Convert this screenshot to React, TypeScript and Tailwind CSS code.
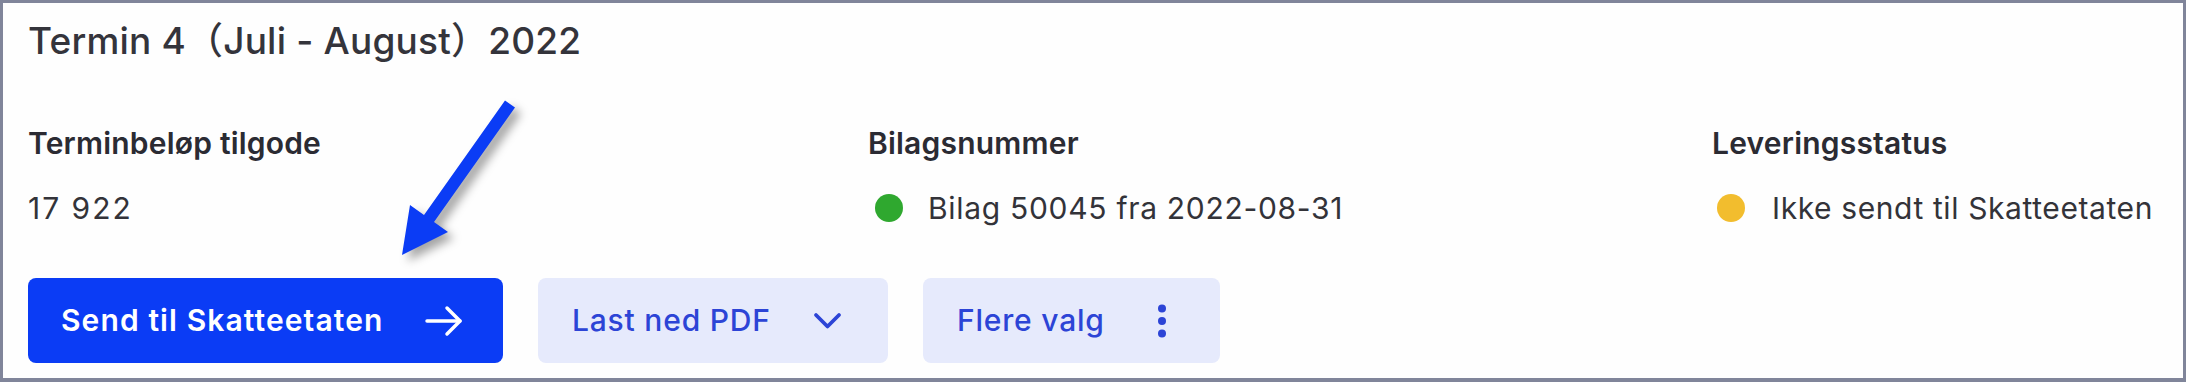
import React from "react";

function Dot({ color }: { color: string }) {
  return <span className={`inline-block h-[28px] w-[28px] shrink-0 rounded-full ${color}`} />;
}

export default function App() {
  return (
    <div className="relative box-border h-[382px] w-[2186px] overflow-hidden border-t-[3px] border-l-[3px] border-r-[3px] border-b-[4px] border-[#80859a] bg-[#fefefe] pl-[25px] pt-[16px] text-[#333339] font-['Inter','Noto_Sans_CJK_SC',sans-serif]">
      <h1 className="text-[37px] leading-[44px] font-medium tracking-[0.2px] text-[#34343b]">Termin 4（Juli - August）2022</h1>

      <div className="mt-[62px] grid grid-cols-[840px_844px_1fr]">
        <div className="flex flex-col gap-[29px]">
          <div className="text-[30px] leading-[36px] font-semibold tracking-[0.2px] text-[#2b2b33]">Terminbeløp tilgode</div>
          <div className="text-[30px] leading-[36px] tracking-[2px] text-[#333339]">17 922</div>
        </div>
        <div className="flex flex-col gap-[29px]">
          <div className="text-[30px] leading-[36px] font-semibold tracking-[0.2px] text-[#2b2b33]">Bilagsnummer</div>
          <div className="flex items-center gap-[25px] pl-[7px] text-[30px] leading-[36px] tracking-[0.7px] text-[#333339]">
            <Dot color="bg-[#2fa82f]" />
            <span>Bilag 50045 fra 2022-08-31</span>
          </div>
        </div>
        <div className="flex flex-col gap-[29px]">
          <div className="text-[30px] leading-[36px] font-semibold tracking-[0.2px] text-[#2b2b33]">Leveringsstatus</div>
          <div className="flex items-center gap-[27px] pl-[5px] text-[30px] leading-[36px] tracking-[0.6px] text-[#333339]">
            <Dot color="bg-[#f2bd2e]" />
            <span className="whitespace-nowrap">Ikke sendt til Skatteetaten</span>
          </div>
        </div>
      </div>

      <div className="mt-[52px] flex gap-[35px]">
        <button className="flex h-[85px] w-[475px] shrink-0 items-center justify-between rounded-[8px] bg-[#0b3cf5] pl-[33px] pr-[40px] text-[30px] font-semibold tracking-[1.1px] text-white">
          <span className="whitespace-nowrap">Send til Skatteetaten</span>
          <svg width="38" height="32" viewBox="0 0 38 32" fill="none" stroke="white" strokeWidth="3.5" strokeLinecap="round" strokeLinejoin="round">
            <path d="M2 16 H35" />
            <path d="M22 3 L35 16 L22 29" />
          </svg>
        </button>
        <button className="flex h-[85px] w-[350px] shrink-0 items-center justify-between rounded-[8px] bg-[#e6eafc] pl-[34px] pr-[46px] text-[30px] font-medium tracking-[0.8px] text-[#2c44d6]">
          <span className="whitespace-nowrap">Last ned PDF</span>
          <svg width="29" height="18" viewBox="0 0 29 18" fill="none" stroke="#2c44d6" strokeWidth="3.8" strokeLinecap="round" strokeLinejoin="round">
            <path d="M3 3 L14.5 14.5 L26 3" />
          </svg>
        </button>
        <button className="flex h-[85px] w-[297px] shrink-0 items-center justify-between rounded-[8px] bg-[#e6eafc] pl-[34px] pr-[53px] text-[30px] font-medium tracking-[0.8px] text-[#2c44d6]">
          <span className="whitespace-nowrap">Flere valg</span>
          <svg width="10" height="34" viewBox="0 0 10 34" fill="#2c44d6">
            <circle cx="5" cy="4.5" r="4" />
            <circle cx="5" cy="17" r="4" />
            <circle cx="5" cy="29.5" r="4" />
          </svg>
        </button>
      </div>

      <svg
        className="pointer-events-none absolute left-[-3px] top-[-3px]"
        width="2186"
        height="382"
        viewBox="0 0 2186 382"
        style={{ filter: "drop-shadow(6px 6px 5px rgba(0,0,0,0.35))" }}
      >
        <polygon points="505,100.5 515,107.5 434,222 448,232 402,255 410,205 424,215" fill="#0b3cf5" />
      </svg>
    </div>
  );
}
